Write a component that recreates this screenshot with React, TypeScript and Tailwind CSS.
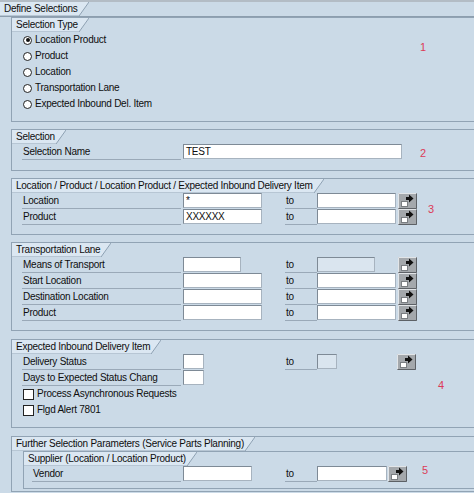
import React from "react";

const TAB_FILL = "#dbe7f2";

function Tab({ title }: { title: string }) {
  return (
    <div className="flex h-[14px] items-stretch self-start">
      <div className="flex items-center bg-[#dbe7f2] pl-[4px] pr-[1px] leading-none whitespace-nowrap border-b border-[#b7c6d4]">
        {title}
      </div>
      <svg width="10" height="14" viewBox="0 0 10 14" className="block shrink-0">
        <polygon points="0,0 10,0 0,14" fill={TAB_FILL} />
        <line x1="0" y1="13.5" x2="0.5" y2="13.5" stroke="#b7c6d4" strokeWidth="1" />
        <line x1="10" y1="0" x2="0" y2="14" stroke="#8ea1b3" strokeWidth="1" />
      </svg>
    </div>
  );
}

function Group({
  title,
  children,
  className = "",
}: {
  title: string;
  children: React.ReactNode;
  className?: string;
}) {
  return (
    <div className={`relative flex flex-col border-y border-l border-[#91a3b4] ${className}`}>
      <Tab title={title} />
      {children}
    </div>
  );
}

function Note({ n, className }: { n: string; className: string }) {
  return (
    <span
      className={`absolute text-[11px] leading-none text-[#dc3a58] font-['Liberation_Sans',Arial,sans-serif] ${className}`}
    >
      {n}
    </span>
  );
}

function Field({
  width,
  value = "",
  disabled = false,
}: {
  width: string;
  value?: string;
  disabled?: boolean;
}) {
  return (
    <div
      className={`${width} h-[15px] shrink-0 border border-[#a7b3bf] border-t-[#7e8a96] border-l-[#7e8a96] px-[2px] flex items-center leading-none ${
        disabled ? "bg-[#dae5ef]" : "bg-white"
      }`}
    >
      {value}
    </div>
  );
}

function MultiButton({ className = "" }: { className?: string }) {
  return (
    <svg width="19" height="16" viewBox="0 0 19 16" className={`block shrink-0 ${className}`}>
      <rect x="0" y="0" width="19" height="16" fill="#a4a8ac" />
      <path d="M0.5 15.5 V0.5 H18.5" fill="none" stroke="#e2e5e8" />
      <path d="M0.5 15.5 H18.5 V0.5" fill="none" stroke="#5d6166" />
      <rect x="3.5" y="8.5" width="6" height="5" fill="#ffffff" stroke="#7a7e82" />
      <path d="M8 4 H11 V1.5 L15.5 5.5 L11 9.5 V7 H8 Z" fill="#111111" />
    </svg>
  );
}

function Label({ text, width = "w-[159px]" }: { text: string; width?: string }) {
  return (
    <div
      className={`${width} h-[16px] shrink-0 border-b border-[#9aa9b8] pl-[1px] flex items-center leading-none whitespace-nowrap`}
    >
      {text}
    </div>
  );
}

function ToLabel() {
  return (
    <div className="w-[32px] h-[16px] shrink-0 border-b border-[#9aa9b8] pl-[1px] flex items-center leading-none">
      to
    </div>
  );
}

function RangeRow({
  label,
  w1,
  v1,
  w2,
  disabled2 = false,
  btnClass = "ml-[2px]",
}: {
  label: string;
  w1: string;
  v1?: string;
  w2: string;
  disabled2?: boolean;
  btnClass?: string;
}) {
  return (
    <div className="flex h-[16px] items-start">
      <Label text={label} />
      <div className="w-[102px] ml-[2px] shrink-0">
        <Field width={w1} value={v1} />
      </div>
      <ToLabel />
      <div className="w-[79px] shrink-0">
        <Field width={w2} disabled={disabled2} />
      </div>
      <MultiButton className={btnClass} />
    </div>
  );
}

function Radio({ label, checked = false }: { label: string; checked?: boolean }) {
  return (
    <div className="flex h-[16px] items-center">
      <span className="w-[9px] h-[9px] rounded-full border border-[#222] bg-white flex items-center justify-center shrink-0">
        {checked && <span className="w-[4px] h-[4px] rounded-full bg-[#111]" />}
      </span>
      <span className="ml-[3px] leading-none whitespace-nowrap">{label}</span>
    </div>
  );
}

function Check({ label }: { label: string }) {
  return (
    <div className="flex h-[16px] items-center">
      <span className="w-[11px] h-[11px] border border-[#222] bg-white shrink-0" />
      <span className="ml-[3px] leading-none whitespace-nowrap">{label}</span>
    </div>
  );
}

export default function App() {
  return (
    <div className="w-[474px] h-[493px] overflow-hidden bg-[#cbdae7] text-[10px] tracking-[-0.25px] text-[#0e0e0e] font-['Liberation_Sans',Arial,sans-serif]">
      {/* page header */}
      <div className="h-[17px] border-t-2 border-t-[#b3bcc5] border-b border-b-[#8d9eae] flex">
        <Tab title="Define Selections" />
      </div>

      <div className="ml-[11px] flex flex-col">
        {/* selection type */}
        <Group title="Selection Type" className="pb-[9px]">
          <div className="pl-[11px] flex flex-col">
            <Radio label="Location Product" checked />
            <Radio label="Product" />
            <Radio label="Location" />
            <Radio label="Transportation Lane" />
            <Radio label="Expected Inbound Del. Item" />
          </div>
          <Note n="1" className="left-[408px] top-[24px]" />
        </Group>

        {/* selection name */}
        <Group title="Selection" className="mt-[7px] pb-[10px]">
          <div className="pl-[10px] flex h-[16px] items-start">
            <Label text="Selection Name" />
            <div className="ml-[2px]">
              <Field width="w-[219px]" value="TEST" />
            </div>
          </div>
          <Note n="2" className="left-[408px] top-[18px]" />
        </Group>

        {/* location / product */}
        <Group
          title="Location / Product / Location Product / Expected Inbound Delivery Item"
          className="mt-[7px] pb-[9px]"
        >
          <div className="pl-[10px] flex flex-col">
            <RangeRow label="Location" w1="w-[79px]" v1="*" w2="w-[79px]" />
            <RangeRow label="Product" w1="w-[79px]" v1="XXXXXX" w2="w-[79px]" />
          </div>
          <Note n="3" className="left-[416px] top-[25px]" />
        </Group>

        {/* transportation lane */}
        <Group title="Transportation Lane" className="mt-[7px] pb-[9px]">
          <div className="pl-[10px] flex flex-col">
            <RangeRow
              label="Means of Transport"
              w1="w-[58px]"
              w2="w-[58px]"
              disabled2
              btnClass="ml-[2px]"
            />
            <RangeRow label="Start Location" w1="w-[79px]" w2="w-[79px]" />
            <RangeRow label="Destination Location" w1="w-[79px]" w2="w-[79px]" />
            <RangeRow label="Product" w1="w-[79px]" w2="w-[79px]" />
          </div>
        </Group>

        {/* expected inbound delivery item */}
        <Group title="Expected Inbound Delivery Item" className="mt-[8px] pb-[9px]">
          <div className="pl-[10px] flex flex-col">
            <RangeRow
              label="Delivery Status"
              w1="w-[21px]"
              w2="w-[20px]"
              disabled2
              btnClass="ml-[1px]"
            />
            <div className="flex h-[16px] items-start">
              <Label text="Days to Expected Status Chang" />
              <div className="ml-[2px]">
                <Field width="w-[21px]" />
              </div>
            </div>
            <div className="pl-[1px] flex flex-col">
              <Check label="Process Asynchronous Requests" />
              <Check label="Flgd Alert 7801" />
            </div>
          </div>
          <Note n="4" className="left-[426px] top-[40px]" />
        </Group>

        {/* further selection parameters */}
        <Group
          title="Further Selection Parameters (Service Parts Planning)"
          className="mt-[8px] pb-[2px]"
        >
          <div className="ml-[11px] flex flex-col border-y border-l border-[#91a3b4] pb-[6px]">
            <Tab title="Supplier (Location / Location Product)" />
            <div className="pl-[8px] flex h-[16px] items-start">
              <Label text="Vendor" width="w-[149px]" />
              <div className="w-[102px] ml-[2px] shrink-0">
                <Field width="w-[69px]" />
              </div>
              <ToLabel />
              <Field width="w-[70px]" />
              <MultiButton className="ml-[1px]" />
            </div>
          </div>
          <Note n="5" className="left-[410px] top-[28px]" />
        </Group>
      </div>
    </div>
  );
}
